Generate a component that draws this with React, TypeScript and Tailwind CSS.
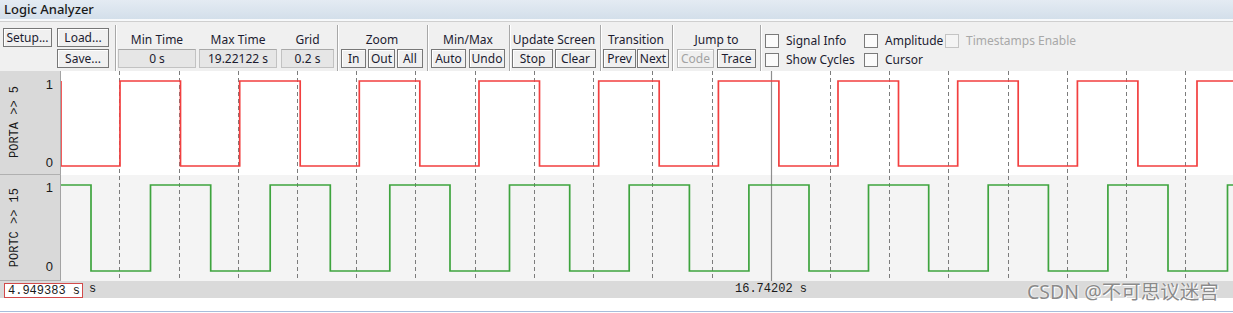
import React from "react";

const P = 119.67;

function redPath() {
  let d = "M61 81 V166";
  for (let n = 0; n < 10; n++) {
    const r = 120 + P * n;
    const f = r + 60.5;
    if (r >= 1233) break;
    d += ` H${r.toFixed(1)} V81`;
    if (f < 1233) d += ` H${f.toFixed(1)} V166`;
    else d += " H1233";
  }
  return d;
}

function greenPath() {
  let d = "M61 185";
  for (let n = 0; n < 10; n++) {
    const f = 91 + P * n;
    const r = 150.5 + P * n;
    if (f >= 1233) break;
    d += ` H${f.toFixed(1)} V271`;
    if (r < 1233) d += ` H${r.toFixed(1)} V185`;
    else {
      d += " H1233";
      return d;
    }
  }
  d += " H1233";
  return d;
}

const gridXs = Array.from({ length: 19 }, (_, k) => Math.round(119.3 + 59.22 * k) + 0.5);

function Btn({ label, cls, disabled }: { label: string; cls: string; disabled?: boolean }) {
  return (
    <div
      className={
        "h-[19px] flex items-center justify-center border bg-[#f0f0f0] shadow-[inset_1px_1px_0_#ffffff] text-[12px] leading-none " +
        (disabled ? "border-[#b8b8b8] text-[#a3a3a3] " : "border-[#777777] text-[#1c1c30] ") +
        cls
      }
    >
      {label}
    </div>
  );
}

function Sep() {
  return <div className="w-[2px] h-[46px] mt-[3px] border-l border-l-[#a8a8a8] border-r border-r-white shrink-0" />;
}

function ValueBox({ label, value, cls }: { label: string; value: string; cls: string }) {
  return (
    <div className={"flex flex-col items-center " + cls}>
      <div className="h-[16px] leading-[16px] mt-[10px] mb-[1px] text-[12px] text-[#1c1c30] whitespace-nowrap">{label}</div>
      <div className="w-full h-[19px] flex items-center justify-center bg-[#e6e6e6] border border-[#c2c2c2] border-t-[#a8a8a8] text-[12px] text-[#1c1c30]">
        {value}
      </div>
    </div>
  );
}

function Group({ label, cls, children }: { label: string; cls: string; children: React.ReactNode }) {
  return (
    <div className={"flex flex-col shrink-0 " + cls}>
      <div className="h-[16px] leading-[16px] mt-[10px] mb-[1px] text-[12px] text-[#1c1c30] text-center whitespace-nowrap">{label}</div>
      <div className="flex">{children}</div>
    </div>
  );
}

function Check({ label, disabled }: { label: string; disabled?: boolean }) {
  return (
    <div className="flex items-center h-[19px]">
      <div
        className={
          "w-[14px] h-[14px] border " +
          (disabled ? "border-[#c4c4c4] bg-[#f4f4f4]" : "border-[#7a7a7a] bg-[#fbfbfb]")
        }
      />
      <span className={"ml-[7px] text-[12px] whitespace-nowrap " + (disabled ? "text-[#a8a8a8]" : "text-[#1c1c30]")}>{label}</span>
    </div>
  );
}

function SignalLabel({ name, h, top1, bottom0 }: { name: string; h: string; top1: string; bottom0: string }) {
  return (
    <div className={"flex w-[61px] bg-[#d9d9d9] border-r border-r-[#a3a3a3] border-b border-b-[#b0b0b0] " + h}>
      <div className="w-[30px] flex items-center justify-center">
        <span className="[writing-mode:vertical-rl] rotate-180 font-['Liberation_Mono',monospace] text-[12px] text-[#1a1a1a] whitespace-nowrap">
          {name}
        </span>
      </div>
      <div className={"flex-1 flex flex-col justify-between items-end pr-[7px] font-['Liberation_Sans',sans-serif] text-[13px] leading-[14px] text-[#1a1a1a] " + top1 + " " + bottom0}>
        <span>1</span>
        <span>0</span>
      </div>
    </div>
  );
}

export default function App() {
  return (
    <div className="w-[1233px] h-[313px] overflow-hidden bg-white relative font-['Noto_Sans','Open_Sans',sans-serif]">
      {/* title */}
      <div className="h-[19px] bg-gradient-to-b from-[#e4ebf3] to-[#d3dfea] flex items-center pl-[4px] text-[13px] font-medium text-[#1a1a1a]">
        Logic Analyzer
      </div>
      <div className="h-[2px] bg-[#f7f9fb]" />
      <div className="h-[1px] bg-[#cfcfcf]" />

      {/* toolbar */}
      <div className="h-[49px] bg-[#f0f0f0] flex">
        <div className="w-[115px] shrink-0 pt-[6px] pl-[3px] flex flex-col">
          <div className="flex">
            <Btn label="Setup..." cls="w-[49px]" />
            <Btn label="Load..." cls="w-[52px] ml-[5px]" />
          </div>
          <div className="flex mt-[2px]">
            <Btn label="Save..." cls="w-[52px] ml-[54px]" />
          </div>
        </div>
        <Sep />
        <div className="w-[220px] shrink-0 flex">
          <ValueBox label="Min Time" value="0 s" cls="w-[78px] ml-[1px]" />
          <ValueBox label="Max Time" value="19.22122 s" cls="w-[78px] ml-[3px]" />
          <ValueBox label="Grid" value="0.2 s" cls="w-[53px] ml-[4px]" />
        </div>
        <Sep />
        <Group label="Zoom" cls="w-[88px] pl-[2px] pr-[4px]">
          <Btn label="In" cls="w-[26px]" />
          <Btn label="Out" cls="w-[27px] ml-[2px]" />
          <Btn label="All" cls="w-[27px] ml-[2px]" />
        </Group>
        <Sep />
        <Group label="Min/Max" cls="w-[80px] pl-[2px] pr-[4px]">
          <Btn label="Auto" cls="w-[35px]" />
          <Btn label="Undo" cls="w-[36px] ml-[3px]" />
        </Group>
        <Sep />
        <Group label="Update Screen" cls="w-[89px] pl-[1px] pr-[4px]">
          <Btn label="Stop" cls="w-[41px]" />
          <Btn label="Clear" cls="w-[41px] ml-[2px]" />
        </Group>
        <Sep />
        <Group label="Transition" cls="w-[70px] pl-[1px] pr-[3px]">
          <Btn label="Prev" cls="w-[33px]" />
          <Btn label="Next" cls="w-[32px] ml-[1px]" />
        </Group>
        <Sep />
        <Group label="Jump to" cls="w-[86px] pl-[3px] pr-[4px]">
          <Btn label="Code" cls="w-[37px]" disabled />
          <Btn label="Trace" cls="w-[39px] ml-[3px]" />
        </Group>
        <Sep />
        <div className="flex pl-[3px] pt-[9px]">
          <div className="w-[99px] flex flex-col">
            <Check label="Signal Info" />
            <Check label="Show Cycles" />
          </div>
          <div className="w-[81px] flex flex-col">
            <Check label="Amplitude" />
            <Check label="Cursor" />
          </div>
          <div className="flex flex-col">
            <Check label="Timestamps Enable" disabled />
          </div>
        </div>
      </div>

      {/* waveform area */}
      <div className="flex">
        <div className="flex flex-col shrink-0">
          <SignalLabel name="PORTA >> 5" h="h-[104px]" top1="pt-[7px]" bottom0="pb-[4px]" />
          <SignalLabel name="PORTC >> 15" h="h-[106px]" top1="pt-[6px]" bottom0="pb-[6px]" />
        </div>
        <div className="flex-1 relative">
          <div className="h-[104px] bg-white" />
          <div className="h-[106px] bg-[#f4f4f4]" />
          <svg className="absolute inset-0" width="1172" height="210" viewBox="61 71 1172 210">
            {gridXs.map((x) => (
              <line key={x} x1={x} y1={71} x2={x} y2={281} stroke="#7c7c7c" strokeWidth="1" strokeDasharray="4 3" />
            ))}
            <line x1={771.5} y1={71} x2={771.5} y2={281} stroke="#8e8e8e" strokeWidth="1.2" />
            <path d={redPath()} fill="none" stroke="#f23f3f" strokeWidth="1.7" />
            <path d={greenPath()} fill="none" stroke="#3ea43e" strokeWidth="1.7" />
          </svg>
        </div>
      </div>

      {/* bottom time bar */}
      <div className="h-[17px] bg-[#dadada] relative font-['Liberation_Mono',monospace] text-[12px] text-[#1a1a1a]">
        <div className="absolute left-[4px] top-[2px] w-[79px] h-[15px] bg-white border border-[#d24a4a] flex items-center pl-[3px] leading-none">
          4.949383 s
        </div>
        <span className="absolute left-[89px] top-[1px] leading-[14px]">s</span>
        <span className="absolute left-[735px] top-[1px] leading-[14px]">16.74202 s</span>
      </div>
      <div className="h-[13px] bg-white" />
      <div className="h-[1px] bg-[#a7bedb]" />
      <div className="h-[1px] bg-white" />

      {/* watermark */}
      <div className="absolute left-[1027px] top-[279px] text-[19.5px] leading-[26px] text-[#8a8a8a] whitespace-nowrap font-['Noto_Sans','Noto_Sans_CJK_SC',sans-serif] [text-shadow:0_0_2px_#ffffff,1px_1px_0_#ffffff]">
        CSDN @不可思议迷宫
      </div>
    </div>
  );
}
